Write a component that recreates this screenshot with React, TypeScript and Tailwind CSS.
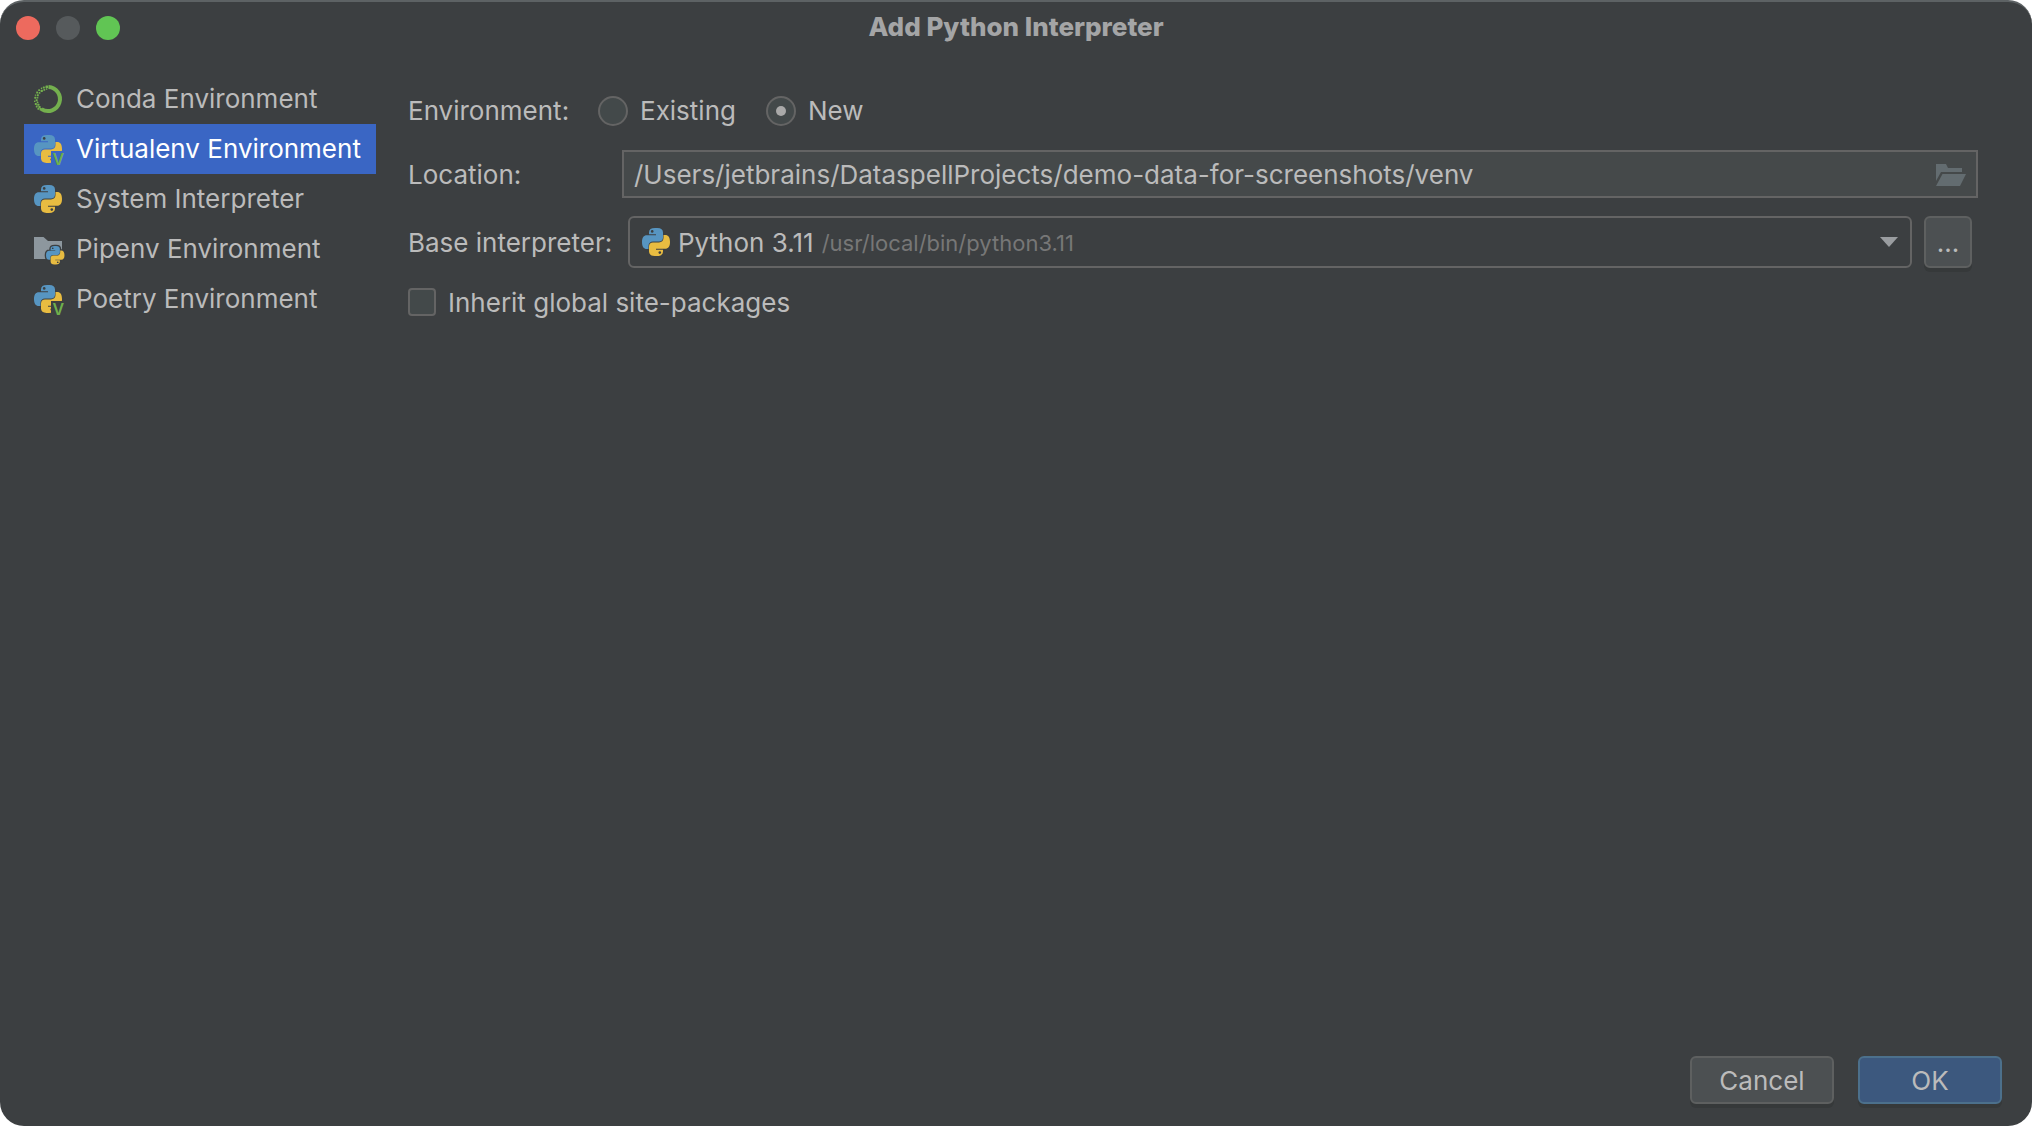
import { useState } from "react";
import type { ReactNode } from "react";
import clsx from "clsx";

const PYTHON_HALF =
  "M13 0H15.500C19 0 21 1.600 21 4.400V9.600C21 12 19.400 13.600 17 13.600H11C8.300 13.600 6.500 15.400 6.500 18V21H5C1.600 21 0 18.400 0 14C0 9.600 1.600 7.200 5 7.200H14V6.300H7V4.400C7 1.400 9 0 13 0Z";

// loose specks on the left side of the conda ring: x, y, size
const CONDA_SPECKS = [
  [11.5, 0.4, 2.6],
  [11.8, 3.2, 1.6],
  [8.8, 1.4, 2],
  [9.4, 4, 1.8],
  [6.8, 2.6, 1.4],
  [6.6, 4.8, 2.2],
  [4.2, 4.2, 1.8],
  [4.6, 7, 1.8],
  [2.2, 6.6, 1.8],
  [2.8, 9.2, 2],
  [0.8, 9.4, 1.4],
  [0.4, 11.8, 2],
  [3, 12, 1.4],
  [1.6, 14.2, 2],
  [0, 15.6, 1.4],
  [2.8, 16.6, 1.6],
  [0.8, 18, 2],
  [3.4, 18.8, 2],
  [1.8, 20.6, 1.8],
  [4.4, 21, 2.2],
  [3.4, 23, 1.8],
  [5.6, 23, 2.4],
];

function PythonShape() {
  return (
    <>
      <path d={PYTHON_HALF} fill="#5795c1" />
      <path d={PYTHON_HALF} fill="#e8bc41" transform="rotate(180 14 14)" />
      <circle cx="10.200" cy="3.400" r="1.300" fill="#3c3f41" />
      <circle cx="17.800" cy="24.600" r="1.300" fill="#3c3f41" />
    </>
  );
}

function PythonIcon() {
  return (
    <svg viewBox="0 0 32 32" className="size-8 shrink-0" aria-hidden="true">
      <PythonShape />
    </svg>
  );
}

function VirtualenvIcon({ id }: { id: string }) {
  return (
    <svg viewBox="0 0 32 32" className="size-8 shrink-0 overflow-visible" aria-hidden="true">
      <clipPath id={id}>
        <path d="M0 0H32V16H17V32H0Z" />
      </clipPath>
      <g clipPath={`url(#${id})`}>
        <PythonShape />
      </g>
      <text x="24.300" y="30" textAnchor="middle" fontSize="16" fontWeight="600" fill="#6fb04c">
        V
      </text>
    </svg>
  );
}

function PipenvIcon() {
  return (
    <svg viewBox="0 0 32 32" className="size-8 shrink-0" aria-hidden="true">
      <path d="M0 2H9.500L14 6H28V24H0Z" fill="#8d979e" />
      <g transform="translate(12 11) scale(0.660)">
        <g stroke="#3c3f41" strokeWidth="4" strokeLinejoin="round">
          <path d={PYTHON_HALF} />
          <path d={PYTHON_HALF} transform="rotate(180 14 14)" />
        </g>
        <PythonShape />
      </g>
    </svg>
  );
}

function CondaIcon() {
  return (
    <svg viewBox="0 0 32 32" className="size-8 shrink-0" aria-hidden="true">
      <path d="M14.500 2A12 12 0 1 1 7.500 24.100" fill="none" stroke="#74b04e" strokeWidth="4" />
      {CONDA_SPECKS.map(([x, y, size]) => (
        <rect key={`${x}-${y}`} x={x} y={y} width={size} height={size} rx="0.500" fill="#74b04e" />
      ))}
    </svg>
  );
}

function FolderOpenIcon() {
  return (
    <svg viewBox="0 0 30 22" className="h-[22px] w-[30px]" aria-hidden="true">
      <path d="M0 0H10L12 4H26V8H5L0 17Z" fill="#636c70" />
      <path d="M6.500 10H30L24 22H0Z" fill="#636c70" />
    </svg>
  );
}

interface EnvironmentKind {
  name: string;
  icon: ReactNode;
}

const kinds: EnvironmentKind[] = [
  { name: "Conda Environment", icon: <CondaIcon /> },
  { name: "Virtualenv Environment", icon: <VirtualenvIcon id="venv-clip" /> },
  { name: "System Interpreter", icon: <PythonIcon /> },
  { name: "Pipenv Environment", icon: <PipenvIcon /> },
  { name: "Poetry Environment", icon: <VirtualenvIcon id="poetry-clip" /> },
];

function RadioOption({
  label,
  checked,
  onChange,
}: {
  label: string;
  checked: boolean;
  onChange: () => void;
}) {
  return (
    <label className="flex items-center gap-3">
      <input
        type="radio"
        name="environment"
        checked={checked}
        onChange={onChange}
        className="grid size-[30px] appearance-none place-items-center rounded-full border-2 border-[#646464] bg-[#43494a] before:size-[10px] before:rounded-full checked:before:bg-[#a9a9a9]"
      />
      {label}
    </label>
  );
}

export default function App() {
  const [selected, setSelected] = useState("Virtualenv Environment");
  const [mode, setMode] = useState("new");
  const [location, setLocation] = useState(
    "/Users/jetbrains/DataspellProjects/demo-data-for-screenshots/venv",
  );

  return (
    <div className="min-h-screen bg-white font-['Inter',sans-serif] text-[26px] leading-[30px] text-[#bbbbbb]">
      <div className="flex min-h-screen flex-col rounded-[24px] border-t-2 border-[#5d6264] bg-[#3c3f41]">
        <header className="grid h-[52px] grid-cols-[1fr_auto_1fr] items-center px-4">
          <div className="flex gap-4">
            <button aria-label="Close" className="size-6 rounded-full bg-[#ed6a5e]" />
            <button aria-label="Minimize" disabled className="size-6 rounded-full bg-[#565a5c]" />
            <button aria-label="Zoom" className="size-6 rounded-full bg-[#61c554]" />
          </div>
          <h1 className="pb-[2px] font-extrabold text-[#a4a5a6]">Add Python Interpreter</h1>
        </header>

        <div className="flex flex-1 pt-5">
          <nav className="ml-6 w-[352px] shrink-0" aria-label="Environment type">
            {kinds.map((kind) => (
              <button
                key={kind.name}
                onClick={() => setSelected(kind.name)}
                aria-current={kind.name === selected}
                className={clsx(
                  "flex h-[50px] w-full items-center gap-[10px] pl-[10px] text-left",
                  kind.name === selected && "bg-[#3a66c4] text-white",
                )}
              >
                <span className="pt-1">{kind.icon}</span>
                <span className="whitespace-nowrap">{kind.name}</span>
              </button>
            ))}
          </nav>

          <main className="ml-8 min-w-0 flex-1 pt-[22px] pr-[54px]">
            <div role="radiogroup" aria-labelledby="env-label" className="flex items-center">
              <span id="env-label" className="w-[190px]">
                Environment:
              </span>
              <div className="flex gap-[30px]">
                <RadioOption
                  label="Existing"
                  checked={mode === "existing"}
                  onChange={() => setMode("existing")}
                />
                <RadioOption
                  label="New"
                  checked={mode === "new"}
                  onChange={() => setMode("new")}
                />
              </div>
            </div>

            <div className="mt-6 flex items-center">
              <label htmlFor="location" className="w-[214px] shrink-0 pt-[2px]">
                Location:
              </label>
              <div className="flex h-12 flex-1 items-center border-2 border-[#646464] bg-[#45494a] px-[10px]">
                <input
                  id="location"
                  type="text"
                  value={location}
                  onChange={(e) => setLocation(e.target.value)}
                  className="min-w-0 flex-1 bg-transparent pt-[2px] outline-none"
                />
                <button aria-label="Browse" className="pt-[2px]">
                  <FolderOpenIcon />
                </button>
              </div>
            </div>

            <div className="mt-[18px] flex items-center pr-[6px]">
              <label htmlFor="base" className="w-[220px] shrink-0 pt-[2px]">
                Base interpreter:
              </label>
              <div className="flex h-[52px] flex-1 items-center rounded-md border-2 border-[#646464] px-3">
                <span className="flex w-9 pt-1">
                  <PythonIcon />
                </span>
                <select
                  id="base"
                  className="field-sizing-content appearance-none bg-transparent pt-[2px] outline-none"
                >
                  <option>Python 3.11</option>
                </select>
                <span className="ml-2 pt-[2px] text-[22px] text-[#777777]">
                  /usr/local/bin/python3.11
                </span>
                <svg viewBox="0 0 18 10" className="ml-auto h-[10px] w-[18px]" aria-hidden="true">
                  <path d="M0 0H18L9 10Z" fill="#9a9da0" />
                </svg>
              </div>
              <button
                aria-label="Choose interpreter"
                className="ml-3 h-[52px] w-12 rounded-md border-2 border-[#5e6060] bg-[#4c5052] pt-[2px] shadow-[0_4px_0_#36393a]"
              >
                ...
              </button>
            </div>

            <label className="mt-5 flex items-center gap-3 leading-7">
              <input
                type="checkbox"
                className="size-7 appearance-none rounded-sm border-2 border-[#646464] bg-[#43494a] checked:bg-[#a9a9a9]"
              />
              <span className="pt-[2px] leading-[26px]">Inherit global site-packages</span>
            </label>
          </main>
        </div>

        <footer className="flex justify-end gap-6 pr-[30px] pb-[22px]">
          <button className="h-12 w-36 rounded-md border-2 border-[#5e6060] bg-[#4c5052] pt-[2px] shadow-[0_4px_0_#36393a]">
            Cancel
          </button>
          <button className="h-12 w-36 rounded-md border-2 border-[#4c708c] bg-[#3c587e] pt-[2px] shadow-[0_4px_0_#36393a]">
            OK
          </button>
        </footer>
      </div>
    </div>
  );
}
